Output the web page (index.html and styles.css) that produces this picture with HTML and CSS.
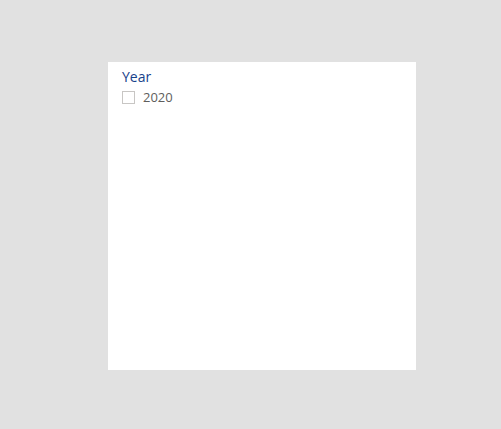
FILE: index.html
```html
<!DOCTYPE html>
<html>
<head>
<meta charset="utf-8">
<link rel="stylesheet" href="styles.css">
</head>
<body>
<div class="page">
  <div class="panel">
    <div class="title">Year</div>
    <div class="item">
      <span class="box"></span>
      <span class="label">2020</span>
    </div>
  </div>
</div>
</body>
</html>
```
FILE: styles.css
```css
html, body {
  margin: 0;
  padding: 0;
  background: #e1e1e1;
  width: 501px;
  height: 429px;
  overflow: hidden;
}
.page {
  padding: 62px 0 0 108px;
}
.panel {
  width: 308px;
  height: 308px;
  background: #ffffff;
  box-sizing: border-box;
  padding: 5px 14px;
  font-family: "Open Sans", "Noto Sans", sans-serif;
}
.title {
  font-size: 14px;
  color: #17428a;
  line-height: 19px;
}
.item {
  display: flex;
  align-items: center;
  gap: 8px;
  margin-top: 2px;
}
.box {
  width: 13px;
  height: 13px;
  box-sizing: border-box;
  border: 1px solid #c8c6c4;
  background: #fff;
}
.label {
  font-size: 13px;
  color: #605e5c;
  line-height: 18px;
}
```
